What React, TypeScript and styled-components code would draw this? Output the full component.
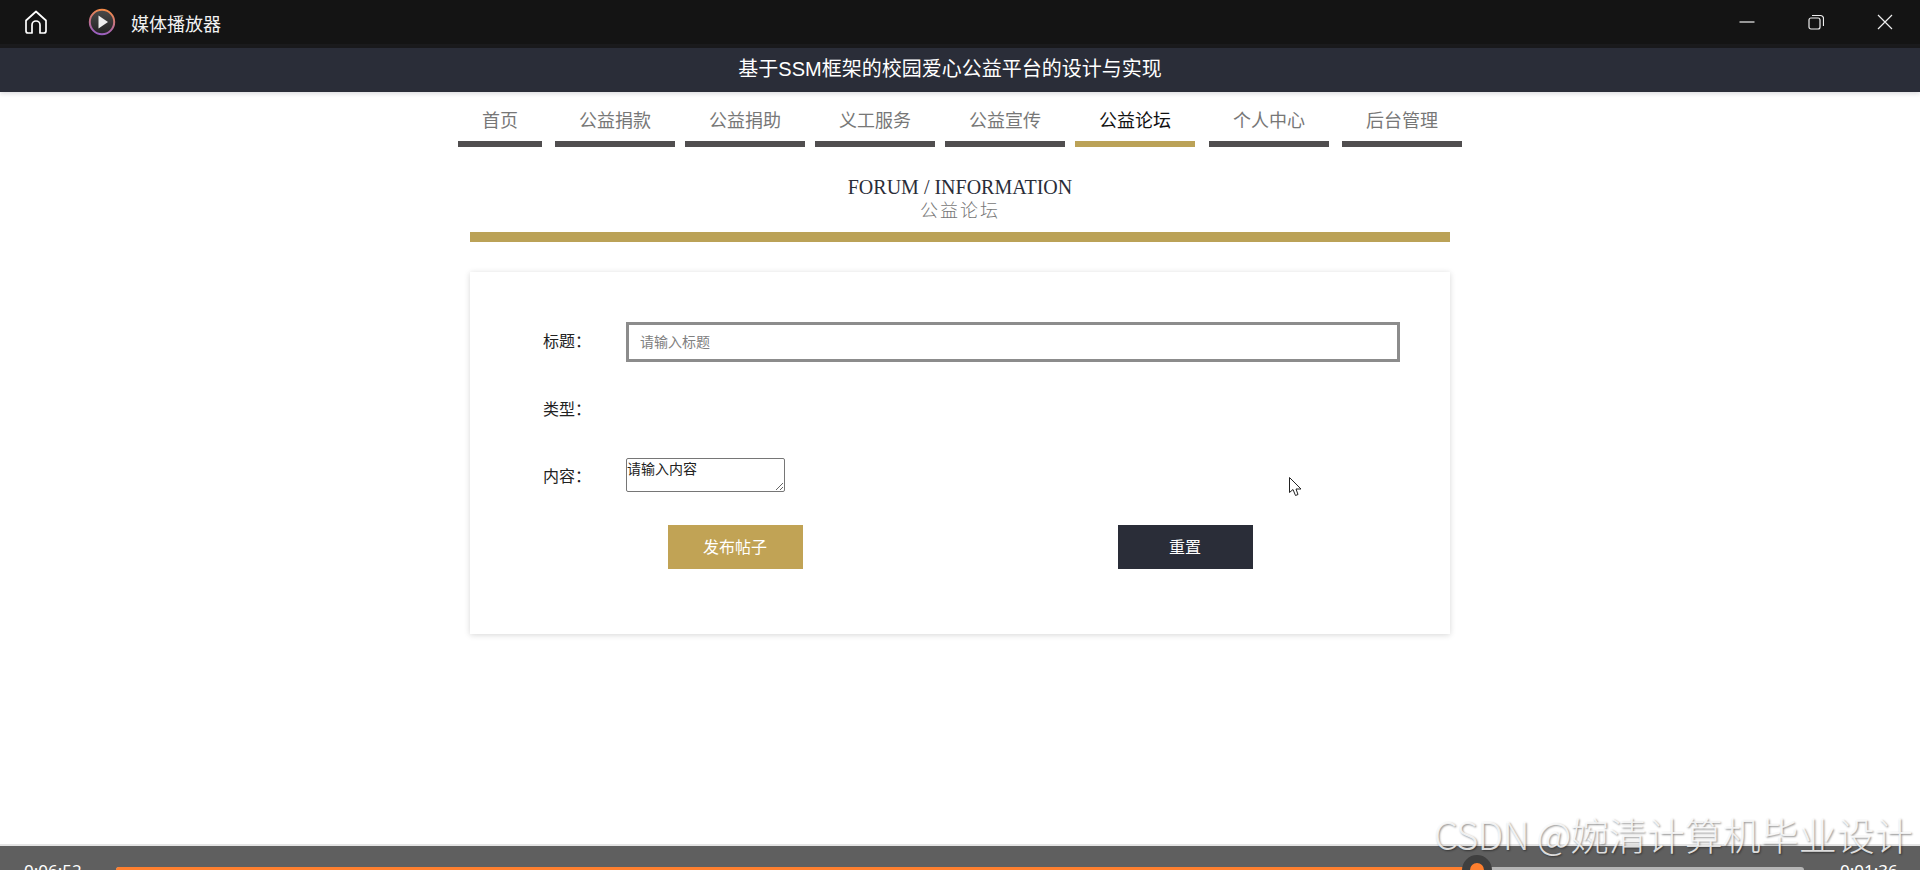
import React from "react";
import styled, { createGlobalStyle } from "styled-components";

const GlobalStyle = createGlobalStyle`
  html, body {
    margin: 0;
    padding: 0;
    height: 100%;
    background: #fff;
    font-family: "Noto Sans CJK SC", "Liberation Sans", sans-serif;
  }
  #root { height: 100%; }
`;

const Page = styled.div`
  position: relative;
  height: 870px;
  display: flex;
  flex-direction: column;
  overflow: hidden;
  background: #fff;
`;

const TitleBar = styled.div`
  height: 44px;
  border-bottom: 4px solid #1a1a1c;
  background: #141414;
  display: flex;
  align-items: center;
  padding: 0 27px 0 24px;
  color: #fff;
  flex: none;
`;

const LogoSlot = styled.div`
  margin-left: 40px;
  width: 28px;
  height: 28px;
`;

const PlayerName = styled.span`
  margin-left: 15px;
  padding-top: 2px;
  font-size: 18px;
  color: #f2f2f2;
`;

const WindowControls = styled.div`
  margin-left: auto;
  display: flex;
  align-items: center;
  gap: 53px;
`;

const AppHeader = styled.header`
  height: 44px;
  box-sizing: border-box;
  padding: 0 20px 6px 0;
  background: #2a2d38;
  color: #fff;
  font-size: 20px;
  font-family: "Liberation Sans", "Noto Sans CJK SC", sans-serif;
  display: flex;
  align-items: center;
  justify-content: center;
  box-shadow: 0 2px 4px rgba(40, 40, 60, 0.15);
  flex: none;
`;

const Nav = styled.nav`
  display: flex;
  padding: 15px 0 0 458px;
  flex: none;
`;

const Tab = styled.a<{ $width: number; $gap: number; $active?: boolean }>`
  width: ${({ $width }) => $width}px;
  margin-left: ${({ $gap }) => $gap}px;
  line-height: 24px;
  padding-bottom: 10px;
  font-size: 18px;
  text-align: center;
  color: ${({ $active }) => ($active ? "#111" : "#777")};
  border-bottom: 6px solid ${({ $active }) => ($active ? "#bba257" : "#504e4f")};
`;

const Main = styled.main`
  flex: 1;
  width: 980px;
  margin-left: 470px;
  display: flex;
  flex-direction: column;
`;

const Heading = styled.div`
  margin-top: 29px;
  text-align: center;
`;

const HeadingEn = styled.div`
  font-family: "Liberation Serif", serif;
  font-size: 20px;
  line-height: 22px;
  color: #2a2d38;
`;

const HeadingCn = styled.div`
  font-size: 18px;
  font-weight: 300;
  line-height: 22px;
  letter-spacing: 2px;
  color: #777;
`;

const GoldBar = styled.div`
  margin-top: 12px;
  height: 10px;
  background: #bba257;
`;

const Card = styled.section`
  margin-top: 30px;
  height: 362px;
  box-sizing: border-box;
  padding: 50px 50px 0 73px;
  background: #fff;
  box-shadow: 0 1px 6px rgba(0, 0, 0, 0.16);
  display: flex;
  flex-direction: column;
  gap: 28px;
`;

const Row = styled.div<{ $height: number }>`
  display: flex;
  align-items: flex-start;
  height: ${({ $height }) => $height}px;
`;

const Label = styled.label<{ $lineHeight?: number }>`
  width: 83px;
  line-height: ${({ $lineHeight }) => $lineHeight ?? 36}px;
  font-size: 16px;
  color: #222;
  flex: none;
`;

const TitleInput = styled.input`
  width: 774px;
  height: 40px;
  box-sizing: border-box;
  border: 3px solid #8c8c8c;
  padding: 0 11px 2px;
  font-size: 14px;
  font-family: inherit;
  outline: none;

  &::placeholder {
    color: #808080;
    opacity: 1;
  }
`;

const ContentArea = styled.textarea`
  width: 159px;
  height: 34px;
  box-sizing: border-box;
  border: 1px solid #767676;
  border-radius: 2px;
  padding: 0;
  margin: 0;
  font-size: 14px;
  line-height: 18px;
  font-family: inherit;
  color: #222;
  overflow: hidden;
  outline: none;
`;

const ButtonRow = styled.div`
  display: flex;
  gap: 315px;
  padding-left: 125px;
`;

const ActionButton = styled.button<{ $color: string }>`
  width: 135px;
  height: 44px;
  border: none;
  padding: 0 1px 3px 0;
  color: #fff;
  font-size: 16px;
  font-family: inherit;
  background: ${({ $color }) => $color};
`;

const PlayerBar = styled.footer`
  height: 24px;
  border-top: 2px solid #e4e4e4;
  background: #5f5f5f;
  overflow: hidden;
  flex: none;
`;

const PlayerRow = styled.div`
  height: 48px;
  display: flex;
  align-items: center;
  padding: 0 27px 0 24px;
  color: #fff;
  font-size: 17px;
  font-family: "Noto Sans", sans-serif;
`;

const TimeText = styled.span`
  width: 92px;
  flex: none;
`;

const Track = styled.div`
  position: relative;
  width: 1688px;
  height: 6px;
  margin-right: 36px;
  background: #b5b5b5;
  border-radius: 3px;
  flex: none;
`;

const TrackFill = styled.div`
  height: 100%;
  background: #ff7f2e;
  border-radius: 3px 0 0 3px;
`;

const Thumb = styled.div`
  position: absolute;
  top: -12px;
  width: 14px;
  height: 14px;
  border: 8px solid #3f3f3f;
  border-radius: 50%;
  background: #ff7f2e;
`;

const Watermark = styled.div`
  position: absolute;
  left: 1434px;
  top: 809px;
  font-size: 38px;
  line-height: 50px;
  font-weight: 300;
  white-space: nowrap;
  color: rgba(255, 255, 255, 0.82);
  text-shadow: 1px 1px 2px rgba(0, 0, 0, 0.45);
`;

const WatermarkLatin = styled.span`
  letter-spacing: -0.6px;
`;

const Cursor = styled.svg`
  position: absolute;
  left: 1289px;
  top: 477px;
`;

const tabs = [
  { name: "首页", width: 84, gap: 0 },
  { name: "公益捐款", width: 120, gap: 13 },
  { name: "公益捐助", width: 120, gap: 10 },
  { name: "义工服务", width: 120, gap: 10 },
  { name: "公益宣传", width: 120, gap: 10 },
  { name: "公益论坛", width: 120, gap: 10, active: true },
  { name: "个人中心", width: 120, gap: 14 },
  { name: "后台管理", width: 120, gap: 13 },
];

export default function App() {
  const progress = 1361 / 1688;

  return (
    <Page>
      <GlobalStyle />
      <TitleBar>
        <svg width="24" height="24" viewBox="0 0 24 24" fill="none" stroke="#fff" strokeWidth="1.7" strokeLinejoin="round">
          <path d="M2 10.5 L12 1.5 L22 10.5 V21 a2 2 0 0 1 -2 2 H16 V15 a4 4 0 0 0 -8 0 V23 H4 a2 2 0 0 1 -2 -2 Z" />
        </svg>
        <LogoSlot>
          <svg width="28" height="28" viewBox="0 0 28 28">
            <defs>
              <linearGradient id="ring" x1="0.7" y1="0" x2="0.5" y2="1">
                <stop offset="0" stopColor="#f58a45" />
                <stop offset="1" stopColor="#9a5fc0" />
              </linearGradient>
              <linearGradient id="disc" x1="0.5" y1="0" x2="0.5" y2="1">
                <stop offset="0" stopColor="#4a4a4a" />
                <stop offset="1" stopColor="#222" />
              </linearGradient>
            </defs>
            <circle cx="14" cy="14" r="12.2" fill="url(#disc)" stroke="url(#ring)" strokeWidth="2" />
            <path d="M10.5 7.5 L20 14 L10.5 20.5 Z" fill="#eee" />
          </svg>
        </LogoSlot>
        <PlayerName>媒体播放器</PlayerName>
        <WindowControls>
          <svg width="16" height="16" viewBox="0 0 16 16" stroke="#eee" strokeWidth="1.2">
            <path d="M0.5 8 H15.5" />
          </svg>
          <svg width="16" height="16" viewBox="0 0 16 16" fill="none" stroke="#eee" strokeWidth="1.2">
            <rect x="1" y="4" width="11" height="11" rx="2" />
            <path d="M4 1.5 H12.5 a3 3 0 0 1 3 3 V12" />
          </svg>
          <svg width="16" height="16" viewBox="0 0 16 16" stroke="#eee" strokeWidth="1.2">
            <path d="M1 1 L15 15 M15 1 L1 15" />
          </svg>
        </WindowControls>
      </TitleBar>
      <AppHeader>基于SSM框架的校园爱心公益平台的设计与实现</AppHeader>
      <Nav>
        {tabs.map((t) => (
          <Tab key={t.name} $width={t.width} $gap={t.gap} $active={t.active}>
            {t.name}
          </Tab>
        ))}
      </Nav>
      <Main>
        <Heading>
          <HeadingEn>FORUM / INFORMATION</HeadingEn>
          <HeadingCn>公益论坛</HeadingCn>
        </Heading>
        <GoldBar />
        <Card>
          <Row $height={40}>
            <Label>标题：</Label>
            <TitleInput placeholder="请输入标题" />
          </Row>
          <Row $height={40}>
            <Label>类型：</Label>
          </Row>
          <Row $height={39}>
            <Label $lineHeight={34}>内容：</Label>
            <ContentArea defaultValue="请输入内容" />
          </Row>
          <ButtonRow>
            <ActionButton $color="#c1a355">发布帖子</ActionButton>
            <ActionButton $color="#2a2d38">重置</ActionButton>
          </ButtonRow>
        </Card>
      </Main>
      <PlayerBar>
        <PlayerRow>
          <TimeText>0:06:52</TimeText>
          <Track>
            <TrackFill style={{ width: `${progress * 100}%` }} />
            <Thumb style={{ left: `${progress * 100 - 0.9}%` }} />
          </Track>
          <span>0:01:36</span>
        </PlayerRow>
      </PlayerBar>
      <Watermark>
        <WatermarkLatin>CSDN @</WatermarkLatin>婉清计算机毕业设计
      </Watermark>
      <Cursor width="13" height="20" viewBox="0 0 13 20" fill="#fff" stroke="#222" strokeWidth="1">
        <path d="M0.5 0.5 V15.5 L4 12.5 L6.5 18.5 L9 17.5 L7 12 H12 Z" />
      </Cursor>
    </Page>
  );
}
